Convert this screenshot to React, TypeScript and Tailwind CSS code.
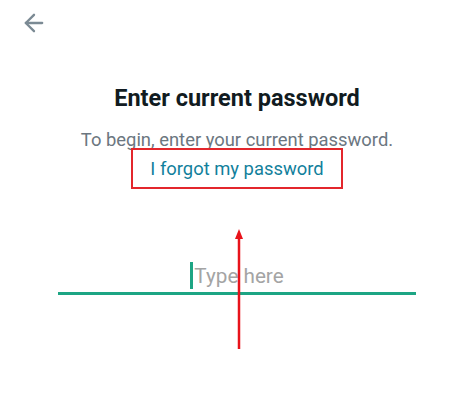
import { ArrowLeft } from "lucide-react";

export default function App() {
  return (
    <div className="relative h-[401px] w-[474px] overflow-hidden bg-white font-['Roboto',sans-serif]">
      {/* Header */}
      <div className="flex h-[48px] items-start pl-[20px] pt-[9px]">
        <ArrowLeft className="h-[28px] w-[28px] text-[#7b8a94]" strokeWidth={2} />
      </div>

      {/* Body */}
      <div className="flex flex-col items-center">
        <h1 className="mt-[36px] text-[23.5px] font-bold leading-[28px] text-[#111b21]">
          Enter current password
        </h1>
        <p className="mt-[17px] text-[18.4px] leading-[21px] text-[#6b7680]">
          To begin, enter your current password.
        </p>
        <div className="mt-[-2px] flex h-[41px] w-[212px] items-center justify-center border-2 border-[#e3262c]">
          <span className="text-[18.4px] leading-[22px] text-[#127f9c]">I forgot my password</span>
        </div>

        {/* Input */}
        <div className="mt-[71px] flex w-[358px] flex-col items-center">
          <div className="flex h-[30px] items-center">
            <span className="mr-[1px] h-[27px] w-[3px] bg-[#1da584]" />
            <span className="mt-[3px] text-[20.7px] text-[#a4a4a4]">Type here</span>
          </div>
          <div className="mt-[2px] h-[2.5px] w-full bg-[#1da584]" />
        </div>
      </div>

      {/* Red arrow annotation */}
      <svg
        className="absolute left-[232px] top-[228px]"
        width="14"
        height="122"
        viewBox="0 0 14 122"
      >
        <line x1="7" y1="8" x2="7" y2="121" stroke="#e8131b" strokeWidth="2.5" />
        <polygon points="7,1 3,11 11,11" fill="#e8131b" />
      </svg>
    </div>
  );
}
